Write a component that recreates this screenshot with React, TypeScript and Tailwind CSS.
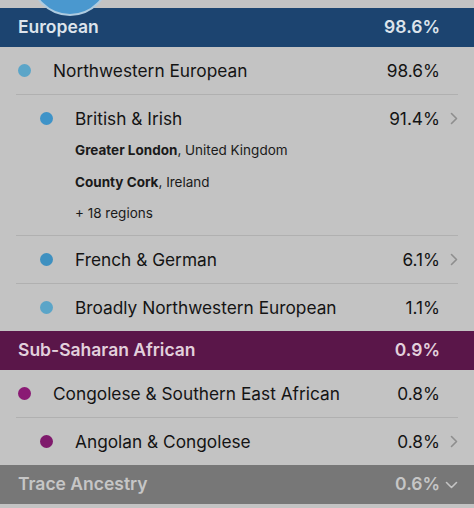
import React from 'react';

type Row = {
  name: string;
  pct: string;
  dot: string;
  indent?: boolean;
  chevron?: boolean;
  divider?: boolean;
  regions?: { bold: string; rest: string }[];
  more?: string;
};

const Chevron = () => (
  <svg width="8" height="13" viewBox="0 0 8 13" fill="none">
    <path d="M1.5 1.5L6.5 6.5L1.5 11.5" stroke="#8e8e8e" strokeWidth="1.6" strokeLinecap="round" strokeLinejoin="round" />
  </svg>
);

const ChevronDown = () => (
  <svg width="13" height="8" viewBox="0 0 13 8" fill="none">
    <path d="M1.5 1.5L6.5 6.5L11.5 1.5" stroke="#c4c4c4" strokeWidth="1.6" strokeLinecap="round" strokeLinejoin="round" />
  </svg>
);

const Header = ({ title, pct, bg, fg, chevron }: { title: string; pct: string; bg: string; fg: string; chevron?: boolean }) => (
  <div className={`h-[39px] flex items-center pl-[18px] pr-[16px] ${bg} ${fg}`}>
    <span className="flex-1 text-[17.5px] font-semibold">{title}</span>
    <span className="text-[17.5px] font-semibold">{pct}</span>
    <span className="w-[18px] flex justify-end">{chevron && <ChevronDown />}</span>
  </div>
);

const ListRow = ({ row }: { row: Row }) => (
  <div className="relative">
    <div className={`flex items-center h-[47px] pr-[16px] ${row.indent ? 'pl-[40px]' : 'pl-[18px]'}`}>
      <span className={`w-[13px] h-[13px] rounded-full ${row.dot}`} />
      <span className="flex-1 ml-[22px] text-[17.3px] text-[#141414]">{row.name}</span>
      <span className="text-[17.3px] text-[#141414]">{row.pct}</span>
      <span className="w-[18px] flex justify-end">{row.chevron && <Chevron />}</span>
    </div>
    {row.regions && (
      <div className="pl-[75px] -mt-[8px] pb-[7px] flex flex-col text-[13.5px] text-[#1a1a1a]">
        {row.regions.map((r) => (
          <div key={r.bold} className="h-[32px] flex items-center">
            <span className="font-bold">{r.bold}</span>
            <span>{r.rest}</span>
          </div>
        ))}
        <div className="h-[30px] flex items-center">{row.more}</div>
      </div>
    )}
    {row.divider && <div className="ml-[16px] mr-[16px] h-px bg-[#b0b0b0]" />}
  </div>
);

const european: Row[] = [
  { name: 'Northwestern European', pct: '98.6%', dot: 'bg-[#5ba5c8]', divider: true },
  {
    name: 'British & Irish',
    pct: '91.4%',
    dot: 'bg-[#3e93c8]',
    indent: true,
    chevron: true,
    divider: true,
    regions: [
      { bold: 'Greater London', rest: ', United Kingdom' },
      { bold: 'County Cork', rest: ', Ireland' },
    ],
    more: '+ 18 regions',
  },
  { name: 'French & German', pct: '6.1%', dot: 'bg-[#3e90c0]', indent: true, chevron: true, divider: true },
  { name: 'Broadly Northwestern European', pct: '1.1%', dot: 'bg-[#5ba5c8]', indent: true },
];

const african: Row[] = [
  { name: 'Congolese & Southern East African', pct: '0.8%', dot: 'bg-[#8a1a74]', divider: true },
  { name: 'Angolan & Congolese', pct: '0.8%', dot: 'bg-[#7f1a6c]', indent: true, chevron: true },
];

export default function App() {
  return (
    <div
      className="w-[474px] h-[508px] overflow-hidden bg-[#c3c3c3] relative"
      style={{ fontFamily: 'Inter, "Noto Sans", sans-serif' }}
    >
      <div className="h-[8px]" />
      <Header title="European" pct="98.6%" bg="bg-[#1c4470]" fg="text-[#dde4ec]" />
      {european.map((r) => (
        <ListRow key={r.name} row={r} />
      ))}
      <Header title="Sub-Saharan African" pct="0.9%" bg="bg-[#5a1649]" fg="text-[#e2d0dc]" />
      {african.map((r) => (
        <ListRow key={r.name} row={r} />
      ))}
      <Header title="Trace Ancestry" pct="0.6%" bg="bg-[#777777]" fg="text-[#c6c6c6]" chevron />
      <div className="absolute left-[30px] top-[-64px] w-[80px] h-[80px] rounded-full bg-[#4a98cf] border-2 border-[#aecbe0]" />
    </div>
  );
}
